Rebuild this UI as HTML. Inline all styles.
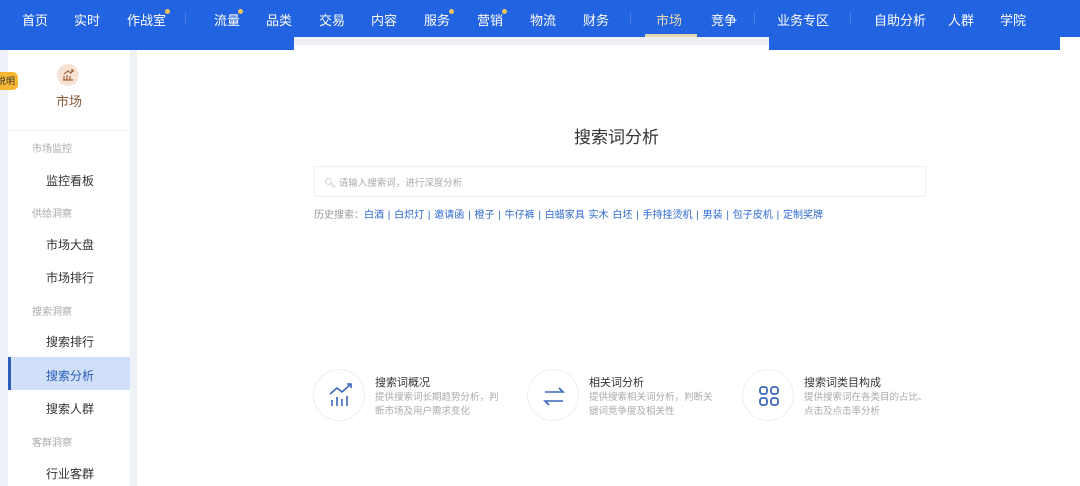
<!DOCTYPE html>
<html><head><meta charset="utf-8"><style>
*{margin:0;padding:0;box-sizing:border-box}
body{width:1080px;height:486px;overflow:hidden;background:#fff;font-family:"Liberation Sans","Noto Sans CJK SC",sans-serif;position:relative}
.nav{position:absolute;left:0;top:0;width:1080px;height:37px;background:#2163e0}
.nav span{position:absolute;top:10px;color:#fff;font-size:13px;white-space:nowrap}
.dot{position:absolute;top:9px;width:5px;height:5px;border-radius:50%;background:#f3c35a}
.sep{position:absolute;top:12px;width:1px;height:13px;background:#4a80e6}
.bl{position:absolute;background:#2163e0}
.side{position:absolute;left:8px;top:50px;width:122px;height:436px;background:#fff}
.gap{position:absolute;left:130px;top:50px;width:7px;height:436px;background:#eef1f6}
.lg{position:absolute;left:0;top:50px;width:8px;height:436px;background:#eef2f8}
.g{position:absolute;left:32px;font-size:10px;color:#aaa}
.i{position:absolute;left:46px;font-size:12px;color:#333}
.c{position:absolute;font-size:11px;color:#333}
.d{position:absolute;font-size:9.5px;color:#aaa;line-height:14px;width:125px}
.circ{position:absolute;width:52px;height:52px;border-radius:50%;border:1px solid #eceef2}
</style></head><body>
<div class="nav">
<span style="left:22px">首页</span><span style="left:74px">实时</span><span style="left:127px">作战室</span><div class="dot" style="left:165px"></div>
<div class="sep" style="left:185px"></div>
<span style="left:214px">流量</span><div class="dot" style="left:238px"></div><span style="left:266px">品类</span><span style="left:319px">交易</span><span style="left:371px">内容</span>
<span style="left:424px">服务</span><div class="dot" style="left:449px"></div><span style="left:477px">营销</span><div class="dot" style="left:502px"></div>
<span style="left:530px">物流</span><span style="left:583px">财务</span><div class="sep" style="left:630px"></div>
<span style="left:656px;color:#e9d9b0">市场</span><div style="position:absolute;left:645px;top:34px;width:52px;height:3px;background:#e3d7b0"></div>
<span style="left:711px">竞争</span><div class="sep" style="left:754px"></div>
<span style="left:777px">业务专区</span><div class="sep" style="left:850px"></div>
<span style="left:874px">自助分析</span><span style="left:948px">人群</span><span style="left:1000px">学院</span>
</div>
<div class="bl" style="left:0;top:37px;width:294px;height:13px"></div>
<div class="bl" style="left:769px;top:37px;width:291px;height:13px"></div>
<div style="position:absolute;left:294px;top:37px;width:475px;height:8px;background:#eef0f4"></div>
<div class="lg"></div><div class="side"></div><div class="gap"></div>
<div style="position:absolute;left:57px;top:64px;width:22px;height:22px;border-radius:50%;background:#f6e3d4"><svg width="22" height="22" viewBox="0 0 22 22" fill="none" stroke="#a0653a" stroke-width="1.2"><path d="M6 16h10M7 16v-4M10 16v-5M13 16v-4M7 10l4-3 3 2 2-3M14 6h2v2"/></svg></div>
<div style="position:absolute;left:56px;top:91px;font-size:13px;color:#8a5a3a">市场</div>
<div style="position:absolute;left:-8px;top:72px;width:26px;height:18px;border-radius:5px;background:#f7b733;font-size:9px;color:#333;line-height:18px;text-align:right;padding-right:3px">说明</div>
<div style="position:absolute;left:8px;top:130px;width:122px;height:1px;background:#eef0f4"></div>
<div class="g" style="top:140px">市场监控</div><div class="i" style="top:172px">监控看板</div>
<div class="g" style="top:205px">供给洞察</div><div class="i" style="top:236px">市场大盘</div><div class="i" style="top:269px">市场排行</div>
<div class="g" style="top:303px">搜索洞察</div><div class="i" style="top:333px">搜索排行</div>
<div style="position:absolute;left:8px;top:357px;width:122px;height:33px;background:#cfe0f8;border-left:3px solid #2a5db8"></div>
<div class="i" style="top:367px;color:#2a5db8">搜索分析</div><div class="i" style="top:400px">搜索人群</div>
<div class="g" style="top:434px">客群洞察</div><div class="i" style="top:465px">行业客群</div>
<div style="position:absolute;left:574px;top:123px;font-size:17px;color:#333">搜索词分析</div>
<div style="position:absolute;left:314px;top:166px;width:612px;height:31px;border:1px solid #ebedf0;border-radius:2px;font-size:9.5px;color:#aaa;padding:8px 0 0 9px">🔍︎ 请输入搜索词，进行深度分析</div>
<div style="position:absolute;left:314px;top:206px;font-size:10px;color:#999;white-space:nowrap;word-spacing:1px">历史搜索：<span style="color:#2f6ad0">白酒 | 白炽灯 | 邀请函 | 橙子 | 牛仔裤 | 白蜡家具 实木 白坯 | 手持挂烫机 | 男装 | 包子皮机 | 定制奖牌</span></div>
<div class="circ" style="left:313px;top:369px"><svg width="52" height="52" viewBox="0 0 52 52" fill="none" stroke="#3a66b8" stroke-width="1.6"><path d="M16 24l7-6 5 4 9-8M33 14h4v4M18 36v-6M23 36v-9M28 36v-7M33 36v-10"/></svg></div>
<div class="c" style="left:375px;top:374px">搜索词概况</div><div class="d" style="left:375px;top:391px">提供搜索词长期趋势分析，判断市场及用户需求变化</div>
<div class="circ" style="left:527px;top:369px"><svg width="52" height="52" viewBox="0 0 52 52" fill="none" stroke="#3a66b8" stroke-width="1.6"><path d="M17 22h18l-4-4M35 31H17l4 4"/></svg></div>
<div class="c" style="left:589px;top:374px">相关词分析</div><div class="d" style="left:589px;top:391px">提供搜索相关词分析，判断关键词竞争度及相关性</div>
<div class="circ" style="left:742px;top:369px"><svg width="52" height="52" viewBox="0 0 52 52" fill="none" stroke="#3a66b8" stroke-width="1.8"><rect x="17" y="17" width="7" height="7" rx="2.5"/><rect x="28" y="17" width="7" height="7" rx="2.5"/><rect x="17" y="28" width="7" height="7" rx="2.5"/><rect x="28" y="28" width="7" height="7" rx="2.5"/></svg></div>
<div class="c" style="left:804px;top:374px">搜索词类目构成</div><div class="d" style="left:804px;top:391px">提供搜索词在各类目的占比、点击及点击率分析</div>
</body></html>
